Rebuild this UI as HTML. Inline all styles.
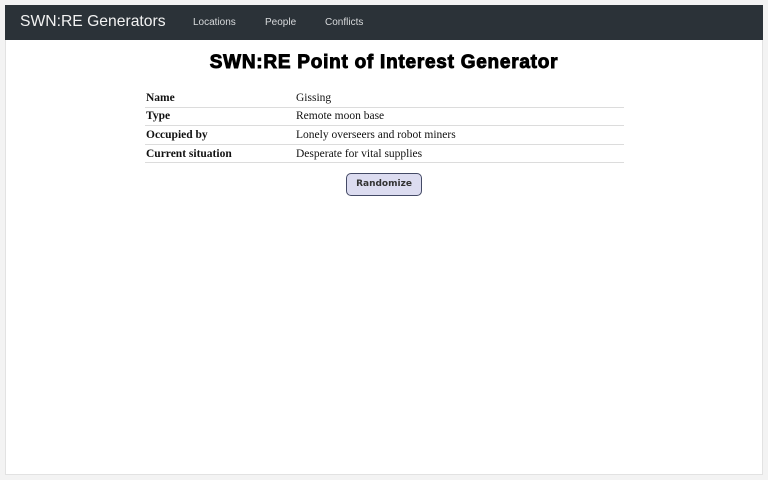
<!DOCTYPE html>
<html><head><meta charset="utf-8"><style>
html,body{margin:0;padding:0;background:#f3f3f3;width:768px;height:480px;overflow:hidden}
.wrap{position:absolute;left:5px;top:5px;width:758px;height:470px;background:#fff;border:1px solid #e2e2e2;box-sizing:border-box}
.nav{position:absolute;left:5px;top:5px;width:758px;height:35px;background:#2b3238;font-family:"Liberation Sans",sans-serif;color:#fff}
.brand{position:absolute;left:15px;top:8px;font-size:15.7px;color:#f2f2f2}
.nav a{position:absolute;top:12px;font-size:10px;color:#d8dadc;font-family:"Liberation Sans",sans-serif}
h1{position:absolute;left:0;width:768px;top:52px;margin:0;text-align:center;font-family:"Liberation Sans",sans-serif;font-weight:bold;font-size:19px;letter-spacing:0.75px;color:#000;-webkit-text-stroke:0.9px #000}
table{position:absolute;left:145px;top:89px;width:479px;border-collapse:collapse;font-family:"Liberation Serif",serif;font-size:11.5px;color:#111}
td{height:17.6px;padding:0 0 0 1px;border-bottom:1px solid #dcdcdc}
td.k{font-weight:bold;width:149px}
.btn{position:absolute;left:346px;top:173px;width:76px;height:23px;box-sizing:border-box;border:1px solid #444a66;border-radius:5px;background:#dcdcf0;font-family:"DejaVu Sans",sans-serif;font-weight:bold;font-size:9px;color:#333;text-align:center;line-height:21px}
</style></head><body>
<div class="wrap"></div>
<div class="nav"><span class="brand">SWN:RE Generators</span>
<a style="left:188px">Locations</a><a style="left:260px">People</a><a style="left:320px">Conflicts</a></div>
<h1>SWN:RE Point of Interest Generator</h1>
<table>
<tr><td class="k">Name</td><td>Gissing</td></tr>
<tr><td class="k">Type</td><td>Remote moon base</td></tr>
<tr><td class="k">Occupied by</td><td>Lonely overseers and robot miners</td></tr>
<tr><td class="k">Current situation</td><td>Desperate for vital supplies</td></tr>
</table>
<div class="btn">Randomize</div>
</body></html>
